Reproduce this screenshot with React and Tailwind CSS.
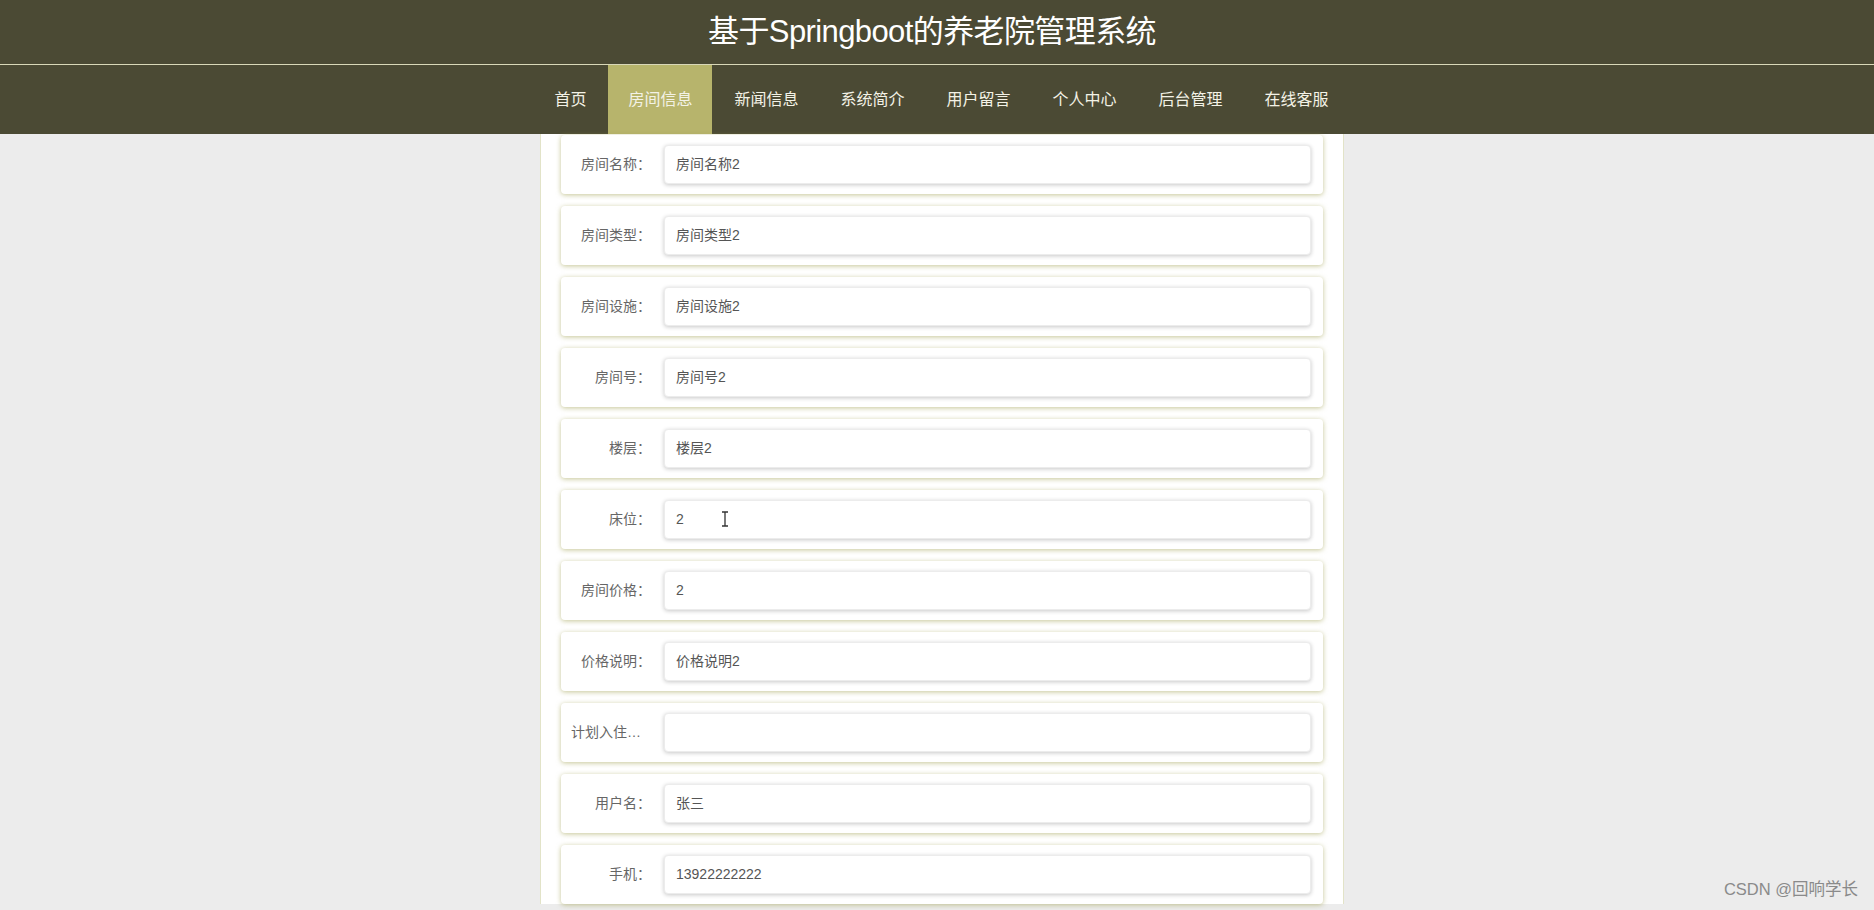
import React from "react";

const navItems = ["首页", "房间信息", "新闻信息", "系统简介", "用户留言", "个人中心", "后台管理", "在线客服"];

const fields = [
  { label: "房间名称：", value: "房间名称2" },
  { label: "房间类型：", value: "房间类型2" },
  { label: "房间设施：", value: "房间设施2" },
  { label: "房间号：", value: "房间号2" },
  { label: "楼层：", value: "楼层2" },
  { label: "床位：", value: "2", cursor: true },
  { label: "房间价格：", value: "2" },
  { label: "价格说明：", value: "价格说明2" },
  { label: "计划入住时间：", value: "" },
  { label: "用户名：", value: "张三" },
  { label: "手机：", value: "13922222222" },
];

const font = { fontFamily: '"Liberation Sans", "Noto Sans CJK SC", sans-serif' };

const Header = () => (
  <div className="bg-[#4b4a34]">
    <div className="h-[64px] flex items-center justify-center pr-[10px] text-white text-[31px] tracking-[-0.6px]">
      基于Springboot的养老院管理系统
    </div>
    <div className="h-px bg-[#d9d8b8]" />
    <ul className="h-[69px] flex justify-center gap-[2px] pl-[9px]">
      {navItems.map((item, i) => (
        <li
          key={item}
          className={`h-full flex items-center px-[20px] text-[16px] text-[#f3f2e6] ${
            i === 1 ? "bg-[#b7b46c]" : ""
          }`}
        >
          {item}
        </li>
      ))}
    </ul>
  </div>
);

const Field = ({ label, value, cursor }) => (
  <div className="flex items-center h-[59px] pl-[10px] pr-[12px] bg-white rounded-[4px] shadow-[0_1px_5px_rgba(160,160,80,0.6)]">
    <div className="w-[82px] shrink-0 text-right text-[14px] text-[#666] truncate pr-[2px]">{label}</div>
    <div className="relative ml-[11px] flex-1 h-[39px] flex items-center pl-[11px] bg-white rounded-[4px] border border-[#ececec] shadow-[0_1px_4px_rgba(0,0,0,0.22)] text-[14px] text-[#555]">
      {value}
      {cursor && (
        <svg className="absolute left-[56px] top-[10px]" width="8" height="16" viewBox="0 0 8 16">
          <path d="M1 1h6M4 1v14M1 15h6" stroke="#333" strokeWidth="1.3" fill="none" />
        </svg>
      )}
    </div>
  </div>
);

export default function App() {
  return (
    <div className="relative h-[910px] overflow-hidden bg-[#ececec]" style={font}>
      <Header />
      <div className="flex justify-center pl-[10px]">
        <div className="w-[804px] bg-white border-x border-[#e2e3c8] px-[20px] pt-px flex flex-col gap-[12px]">
          {fields.map((f) => (
            <Field key={f.label} {...f} />
          ))}
        </div>
      </div>
      <div className="absolute right-[16px] bottom-[8px] text-[16.5px] text-[#8a8a8a]">CSDN @回响学长</div>
    </div>
  );
}
